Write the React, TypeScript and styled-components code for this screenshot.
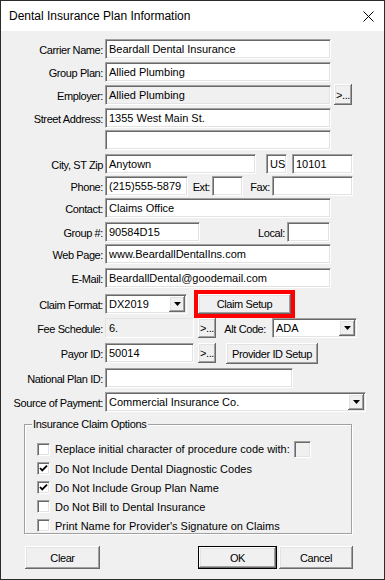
import React from "react";
import styled, { createGlobalStyle, css } from "styled-components";

const GlobalStyle = createGlobalStyle`
  html, body { margin: 0; padding: 0; background: #fff; }
  body { font-family: "Liberation Sans", Arial, sans-serif; font-size: 11px; color: #000; }
  * { box-sizing: border-box; }
`;

const Window = styled.div`
  width: 385px;
  height: 580px;
  border: 1px solid #2b2b2b;
  display: flex;
  flex-direction: column;
  background: #f0f0f0;
  overflow: hidden;
`;

const TitleBar = styled.div`
  height: 30px;
  flex-shrink: 0;
  background: #fff;
  display: flex;
  align-items: center;
  justify-content: space-between;
  padding: 0 10px 0 8px;
`;

const Title = styled.div`
  font-family: "Liberation Sans", Arial, sans-serif;
  font-size: 12px;
  color: #000;
`;

const Body = styled.div`
  flex: 1;
  display: flex;
  flex-direction: column;
  padding-top: 8px;
`;

const Row = styled.div<{ $h: number }>`
  display: flex;
  align-items: flex-start;
  height: ${(p) => p.$h}px;
  flex-shrink: 0;
`;

const Label = styled.div<{ $w?: number; $ml?: number; $mr?: number }>`
  width: ${(p) => p.$w ?? 102}px;
  margin-left: ${(p) => p.$ml ?? 0}px;
  margin-right: ${(p) => p.$mr ?? 2}px;
  text-align: right;
  padding-top: 4px;
  line-height: 14px;
  letter-spacing: -0.4px;
  white-space: nowrap;
  flex-shrink: 0;
`;

const sunken = css`
  border: 1px solid;
  border-color: #a0a0a0 #fff #fff #a0a0a0;
  box-shadow: inset 1px 1px 0 #696969, inset -1px -1px 0 #e3e3e3;
`;

const Field = styled.div<{ $w: number; $ml?: number; $gray?: boolean; $flat?: boolean; $h?: number; $mt?: number }>`
  width: ${(p) => p.$w}px;
  height: ${(p) => p.$h ?? 20}px;
  margin-left: ${(p) => p.$ml ?? 0}px;
  margin-top: ${(p) => p.$mt ?? 0}px;
  flex-shrink: 0;
  ${(p) =>
    p.$flat
      ? css`
          border: 1px solid;
          border-color: #e3e3e3 #fff #fff #e3e3e3;
        `
      : sunken}
  background: ${(p) => (p.$gray ? "#f0f0f0" : "#fff")};
  padding-left: 3px;
  line-height: 18px;
  white-space: nowrap;
  overflow: hidden;
  display: flex;
  align-items: center;
`;

const Value = styled.span`
  flex: 1;
  line-height: 18px;
`;

const raised = css`
  border: none;
  background: #f0f0f0;
  box-shadow: inset -1px -1px 0 #696969, inset 1px 1px 0 #fff, inset -2px -2px 0 #a0a0a0, inset 2px 2px 0 #e3e3e3;
`;

const DropBtn = styled.div`
  ${raised}
  width: 16px;
  height: 16px;
  margin-right: 1px;
  flex-shrink: 0;
  display: flex;
  align-items: center;
  justify-content: center;
`;

const Button = styled.button<{ $w: number; $h?: number; $ml?: number; $mt?: number; $outlined?: boolean; $default?: boolean }>`
  ${raised}
  width: ${(p) => p.$w}px;
  height: ${(p) => p.$h ?? 20}px;
  margin: ${(p) => p.$mt ?? 0}px 0 0 ${(p) => p.$ml ?? 0}px;
  padding: 0;
  font-family: "Liberation Sans", Arial, sans-serif;
  font-size: 11px;
  letter-spacing: -0.4px;
  color: #000;
  flex-shrink: 0;
  ${(p) =>
    p.$outlined &&
    css`
      outline: 4px solid #ff0000;
    `}
  ${(p) =>
    p.$default &&
    css`
      border: 1px solid #000;
    `}
`;

const GroupBox = styled.fieldset`
  margin: 0 0 0 23px;
  width: 328px;
  height: 116px;
  padding: 8px 0 0 7px;
  border: 1px solid #a0a0a0;
  box-shadow: 1px 1px 0 #fff, inset 1px 1px 0 #fff;
  flex-shrink: 0;
`;

const Legend = styled.legend`
  padding: 0 1px;
  line-height: 13px;
  letter-spacing: -0.3px;
  background: #f0f0f0;
`;

const CheckRow = styled.div<{ $h: number }>`
  display: flex;
  align-items: center;
  height: ${(p) => p.$h}px;
  padding-left: 5px;
`;

const Box = styled.div`
  width: 13px;
  height: 13px;
  border: 1px solid;
  border-color: #a0a0a0 #fff #fff #a0a0a0;
  box-shadow: inset 1px 1px 0 #696969, inset -1px -1px 0 #e3e3e3;
  background: #fff;
  margin-right: 5px;
  flex-shrink: 0;
  display: flex;
  align-items: center;
  justify-content: center;
`;

const CheckText = styled.span`
  white-space: nowrap;
`;

const ButtonBar = styled.div`
  display: flex;
  margin: 12px 0 0 24px;
`;

const Arrow = () => (
  <svg width="7" height="4" viewBox="0 0 7 4">
    <polygon points="0,0 7,0 3.5,4" fill="#000" />
  </svg>
);

const Check = () => (
  <svg width="9" height="9" viewBox="0 0 9 9">
    <polyline points="1,4 3.2,6.4 8,1.6" fill="none" stroke="#000" strokeWidth="1.8" />
  </svg>
);

const Select = ({ w, ml, value }: { w: number; ml?: number; value: string }) => (
  <Field $w={w} $ml={ml}>
    <Value>{value}</Value>
    <DropBtn>
      <Arrow />
    </DropBtn>
  </Field>
);

const CheckItem = ({ h, checked, children }: { h: number; checked?: boolean; children: React.ReactNode }) => (
  <CheckRow $h={h}>
    <Box>{checked && <Check />}</Box>
    {children}
  </CheckRow>
);

export default function App() {
  return (
    <>
      <GlobalStyle />
      <Window>
        <TitleBar>
          <Title>Dental Insurance Plan Information</Title>
          <svg width="11" height="11" viewBox="0 0 11 11">
            <path d="M0.5 0.5 L10.5 10.5 M10.5 0.5 L0.5 10.5" stroke="#000" strokeWidth="1" />
          </svg>
        </TitleBar>
        <Body>
          <Row $h={23}>
            <Label>Carrier Name:</Label>
            <Field $w={226}>Beardall Dental Insurance</Field>
          </Row>
          <Row $h={23}>
            <Label>Group Plan:</Label>
            <Field $w={226}>Allied Plumbing</Field>
          </Row>
          <Row $h={23}>
            <Label>Employer:</Label>
            <Field $w={226} $gray>Allied Plumbing</Field>
            <Button $w={18} $h={21} $ml={3} $mt={-1}>&gt;...</Button>
          </Row>
          <Row $h={22}>
            <Label>Street Address:</Label>
            <Field $w={226}>1355 West Main St.</Field>
          </Row>
          <Row $h={24}>
            <Label />
            <Field $w={226} />
          </Row>
          <Row $h={22}>
            <Label>City, ST Zip</Label>
            <Field $w={151}>Anytown</Field>
            <Field $w={21} $ml={10}>US</Field>
            <Field $w={61} $ml={5}>10101</Field>
          </Row>
          <Row $h={22}>
            <Label>Phone:</Label>
            <Field $w={83}>(215)555-5879</Field>
            <Label $w={19} $ml={3}>Ext:</Label>
            <Field $w={31} />
            <Label $w={22} $ml={5}>Fax:</Label>
            <Field $w={81} />
          </Row>
          <Row $h={24}>
            <Label>Contact:</Label>
            <Field $w={226}>Claims Office</Field>
          </Row>
          <Row $h={22}>
            <Label>Group #:</Label>
            <Field $w={95}>90584D15</Field>
            <Label $w={85}>Local:</Label>
            <Field $w={43} />
          </Row>
          <Row $h={24}>
            <Label>Web Page:</Label>
            <Field $w={226}>www.BeardallDentalIns.com</Field>
          </Row>
          <Row $h={26}>
            <Label>E-Mail:</Label>
            <Field $w={226}>BeardallDental@goodemail.com</Field>
          </Row>
          <Row $h={24}>
            <Label>Claim Format:</Label>
            <Select w={82} value="DX2019" />
            <Button $w={93} $ml={11} $outlined>Claim Setup</Button>
          </Row>
          <Row $h={25}>
            <Label>Fee Schedule:</Label>
            <Field $w={89} $gray $flat>6.</Field>
            <Button $w={18} $ml={4}>&gt;...</Button>
            <Label $w={50} $mr={6}>Alt Code:</Label>
            <Select w={85} value="ADA" />
          </Row>
          <Row $h={25}>
            <Label>Payor ID:</Label>
            <Field $w={89}>50014</Field>
            <Button $w={18} $ml={4}>&gt;...</Button>
            <Button $w={92} $h={21} $ml={10}>Provider ID Setup</Button>
          </Row>
          <Row $h={24}>
            <Label>National Plan ID:</Label>
            <Field $w={188} />
          </Row>
          <Row $h={26}>
            <Label>Source of Payment:</Label>
            <Select w={261} value="Commercial Insurance Co." />
          </Row>
          <GroupBox>
            <Legend>Insurance Claim Options</Legend>
            <CheckItem h={20}>
              <CheckText>Replace initial character of procedure code with:</CheckText>
              <Field $w={17} $h={17} $ml={4} $gray />
            </CheckItem>
            <CheckItem h={19} checked>
              <CheckText>Do Not Include Dental Diagnostic Codes</CheckText>
            </CheckItem>
            <CheckItem h={19} checked>
              <CheckText>Do Not Include Group Plan Name</CheckText>
            </CheckItem>
            <CheckItem h={19}>
              <CheckText>Do Not Bill to Dental Insurance</CheckText>
            </CheckItem>
            <CheckItem h={19}>
              <CheckText>Print Name for Provider's Signature on Claims</CheckText>
            </CheckItem>
          </GroupBox>
          <ButtonBar>
            <Button $w={75} $h={23}>Clear</Button>
            <Button $w={79} $h={23} $ml={98} $default>OK</Button>
            <Button $w={74} $h={23} $ml={2}>Cancel</Button>
          </ButtonBar>
        </Body>
      </Window>
    </>
  );
}
